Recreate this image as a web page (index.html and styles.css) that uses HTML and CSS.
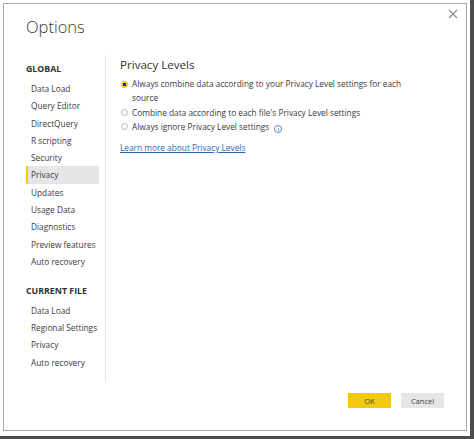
FILE: index.html
```html
<!DOCTYPE html>
<html lang="en">
<head>
<meta charset="utf-8" />
<title>Options</title>
<link rel="stylesheet" href="styles.css">
</head>
<body>

<div class="frame">
	<div class="dialog">
		<header class="head">
			<h1>Options</h1>
			<span class="close" aria-label="Close">
				<svg width="10" height="10" viewBox="0 0 10 10"><path d="M1 1L9 9M9 1L1 9" stroke="#8a8a8a" stroke-width="1.1" fill="none"/></svg>
			</span>
		</header>

		<div class="main">
			<nav class="side">
				<h2>GLOBAL</h2>
				<ul>
					<li>Data Load</li>
					<li>Query Editor</li>
					<li>DirectQuery</li>
					<li>R scripting</li>
					<li>Security</li>
					<li class="on">Privacy</li>
					<li>Updates</li>
					<li>Usage Data</li>
					<li>Diagnostics</li>
					<li>Preview features</li>
					<li>Auto recovery</li>
				</ul>
				<h2 class="second">CURRENT FILE</h2>
				<ul>
					<li>Data Load</li>
					<li>Regional Settings</li>
					<li>Privacy</li>
					<li>Auto recovery</li>
				</ul>
			</nav>

			<section class="pane">
				<h3>Privacy Levels</h3>
				<div class="opts">
					<label class="opt checked"><span class="radio"></span><span class="txt">Always combine data according to your Privacy Level settings for each source</span></label>
					<label class="opt"><span class="radio"></span><span class="txt">Combine data according to each file's Privacy Level settings</span></label>
					<label class="opt"><span class="radio"></span><span class="txt">Always ignore Privacy Level settings <span class="info">i</span></span></label>
				</div>
				<a class="more" href="#">Learn more about Privacy Levels</a>
			</section>
		</div>

		<footer class="foot">
			<button class="btn ok">OK</button>
			<button class="btn">Cancel</button>
		</footer>
	</div>
</div>

</body>
</html>
```

FILE: styles.css
```css
html, body {
	margin: 0;
	background: #fff;
}
body {
	width: 474px;
	height: 439px;
	overflow: hidden;
	font: 8.3px "Open Sans", "Noto Sans", sans-serif;
	color: #333;
}

/* --------------------------------- */

.frame {
	box-sizing: border-box;
	width: 474px;
	height: 439px;
	padding: 3px 3px 5px 3px;
	border-right: 4px solid #4d4d4d;
	border-bottom: 3px solid #4d4d4d;
}
.dialog {
	position: relative;
	box-sizing: border-box;
	height: 428px;
	border: 1px solid #a9a9a9;
	display: flex;
	flex-direction: column;
}

.head {
	height: 51px;
	padding: 11px 0 0 22px;
	box-sizing: border-box;
}
.head h1 {
	margin: 0;
	font: 300 16.5px/24px "Open Sans", "Noto Sans", sans-serif;
	color: #3b3b3b;
}
.close {
	position: absolute;
	top: 5px; right: 8px;
	display: flex;
}

/* --------------------------------- */

.main {
	display: flex;
	height: 327px;
}
.side {
	width: 102px;
	flex: none;
	border-right: 1px solid #e6e6e6;
	padding: 6px 0 0 22px;
	box-sizing: border-box;
}
.side h2 {
	margin: 0 0 2px;
	font: 700 8.8px/17px "Open Sans", "Noto Sans", sans-serif;
	color: #333;
}
.side h2.second {
	margin-top: 12.5px;
}
.side ul {
	list-style: none;
	margin: 0;
	padding: 0;
}
.side li {
	height: 17.3px;
	line-height: 17.3px;
	padding-left: 3px;
	margin-right: 6px;
	border-left: 2px solid transparent;
	color: #3a3a3a;
	white-space: nowrap;
}
.side li.on {
	background: #e6e6e6;
	border-left-color: #f2c811;
}

/* --------------------------------- */

.pane {
	padding: 1px 0 0 14px;
}
.pane h3 {
	margin: 0;
	font: 400 11.6px/18px "Open Sans", "Noto Sans", sans-serif;
	color: #333;
}
.opts {
	margin-top: 3px;
	width: 285px;
}
.opt {
	display: flex;
	align-items: flex-start;
	line-height: 14.3px;
	color: #3a3a3a;
}
.radio {
	flex: none;
	width: 7px;
	height: 7px;
	margin: 3.5px 4px 0 1px;
	border: 1px solid #b7b7b7;
	border-radius: 50%;
	box-sizing: border-box;
}
.opt.checked .radio {
	border-color: #e2b400;
	background: radial-gradient(circle, #333 0 1.6px, #f7d34a 2px);
}
.info {
	display: inline-block;
	width: 8px;
	height: 8px;
	margin-left: 3px;
	border: 1px solid #5b86c6;
	border-radius: 50%;
	box-sizing: border-box;
	font: 6px/6px "DejaVu Serif", serif;
	color: #3d6fba;
	text-align: center;
	vertical-align: -1px;
}
.more {
	display: inline-block;
	margin-top: 7px;
	line-height: 14px;
	color: #2f66b4;
}

/* --------------------------------- */

.foot {
	display: flex;
	justify-content: flex-end;
	gap: 10px;
	padding: 11px 22px 0 0;
}
.btn {
	width: 43px;
	height: 15px;
	padding: 0;
	border: none;
	background: #e6e6e6;
	font: 7.5px "Open Sans", "Noto Sans", sans-serif;
	color: #444;
}
.btn.ok {
	background: #f2c811;
}
```
